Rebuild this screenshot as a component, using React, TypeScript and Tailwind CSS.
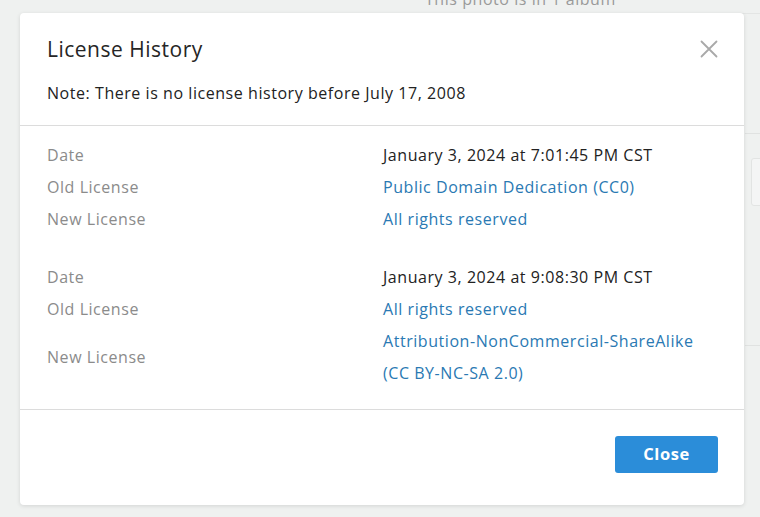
import React from "react";

const font = { fontFamily: "'Open Sans', Lato, sans-serif" };

function Row({ label, children }: { label: string; children: React.ReactNode }) {
  return (
    <div className="flex items-center">
      <div className="w-[336px] shrink-0 text-[#8b8b8b]">{label}</div>
      <div className="flex-1">{children}</div>
    </div>
  );
}

export default function App() {
  return (
    <div
      className="relative h-[517px] w-[760px] overflow-hidden bg-[#eff1f0] font-['Open_Sans',sans-serif] tracking-[0.55px]"
      style={font}
    >
      {/* background page */}
      <div className="absolute left-[425px] top-[-11px] text-[16px] leading-[20px] text-[#9a9a9a]">This photo is in 1 album</div>
      <div className="absolute left-[400px] top-[13px] h-px w-[360px] bg-[#e3e5e4]" />
      <div className="absolute left-[745px] top-[133px] h-px w-[15px] bg-[#e0e2e1]" />
      <div className="absolute left-[751px] top-[158px] h-[48px] w-[20px] rounded-[3px] border border-[#e2e4e3] bg-[#f4f5f5]" />
      <div className="absolute left-[745px] top-[345px] h-px w-[15px] bg-[#e0e2e1]" />

      {/* modal */}
      <div className="relative ml-[20px] mt-[13px] flex h-[492px] w-[724px] flex-col rounded-[4px] bg-white shadow-[0_1px_4px_rgba(0,0,0,0.12)]">
        <div className="relative px-[27px] pb-[20px] pt-[21px]">
          <div className="text-[21px] leading-[30px] tracking-[0.5px] text-[#262626]">License History</div>
          <div className="mt-[17px] text-[16px] leading-[24px] text-[#222]">
            Note: There is no license history before July 17, 2008
          </div>
          <button className="absolute right-[24px] top-[25px] flex h-[22px] w-[22px] items-center justify-center">
            <svg width="18" height="18" viewBox="0 0 18 18" fill="none" stroke="#a9a9a9" strokeWidth="1.8" strokeLinecap="round">
              <path d="M1.5 1.5 L16.5 16.5 M16.5 1.5 L1.5 16.5" />
            </svg>
          </button>
        </div>
        <div className="h-px bg-[#dcdcdc]" />
        <div className="px-[27px] pb-[20px] pt-[13px] text-[16px] leading-[32px]">
          <Row label="Date">
            <span className="text-[#222]">January 3, 2024 at 7:01:45 PM CST</span>
          </Row>
          <Row label="Old License">
            <a className="text-[#2a79b3]">Public Domain Dedication (CC0)</a>
          </Row>
          <Row label="New License">
            <a className="text-[#2a79b3]">All rights reserved</a>
          </Row>
          <div className="h-[26px]" />
          <Row label="Date">
            <span className="text-[#222]">January 3, 2024 at 9:08:30 PM CST</span>
          </Row>
          <Row label="Old License">
            <a className="text-[#2a79b3]">All rights reserved</a>
          </Row>
          <Row label="New License">
            <a className="block text-[#2a79b3]">
              Attribution-NonCommercial-ShareAlike
              <br />
              (CC BY-NC-SA 2.0)
            </a>
          </Row>
        </div>
        <div className="h-px bg-[#dcdcdc]" />
        <div className="flex justify-end px-[26px] pt-[26px]">
          <button className="h-[37px] w-[103px] rounded-[3px] bg-[#2b8dd9] text-[16.5px] font-bold text-white">
            Close
          </button>
        </div>
      </div>
    </div>
  );
}
